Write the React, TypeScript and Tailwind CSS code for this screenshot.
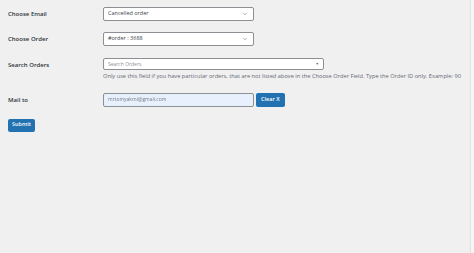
import { ChevronDown } from 'lucide-react'

function SelectBox({ value }: { value: string }) {
  return (
    <div className="flex items-center justify-between w-[151px] h-[14px] bg-white border border-[#8c8f94] rounded-[2px] pl-[4px] pr-[5px]">
      <span className="text-[5.5px] text-[#3c434a] leading-none">{value}</span>
      <ChevronDown size={6} strokeWidth={2.25} className="text-[#646970]" />
    </div>
  )
}

export default function App() {
  return (
    <div className="flex w-full h-[253px] font-['Open_Sans',sans-serif] text-[#2c3338]">
      <div className="flex-1 bg-[#f0f0f1] pl-[8px] pt-[7px]">
        {/* Choose Email */}
        <div className="flex items-center h-[14px]">
          <div className="w-[95px] text-[6px] font-semibold leading-none">Choose Email</div>
          <SelectBox value="Cancelled order" />
        </div>

        {/* Choose Order */}
        <div className="flex items-center h-[14px] mt-[11px]">
          <div className="w-[95px] text-[6px] font-semibold leading-none">Choose Order</div>
          <SelectBox value="#order : 3688" />
        </div>

        {/* Search Orders */}
        <div className="flex mt-[12px]">
          <div className="w-[95px] text-[6px] font-semibold leading-none pt-[4px]">Search Orders</div>
          <div className="flex flex-col">
            <div className="flex items-center justify-between w-[221px] h-[12px] bg-white border border-[#8c8f94] rounded-[2px] pl-[4px] pr-[4px]">
              <span className="text-[5px] text-[#8c8f94] leading-none">Search Orders</span>
              <span className="text-[3.5px] text-[#646970] leading-none">▼</span>
            </div>
            <p className="mt-[4px] text-[5.7px] leading-none text-[#646970] whitespace-nowrap">
              Only use this field if you have particular orders, that are not listed above in the Choose Order Field. Type the Order ID only. Example: 90
            </p>
          </div>
        </div>

        {/* Mail to */}
        <div className="flex items-center h-[14px] mt-[13px]">
          <div className="w-[95px] text-[6px] font-semibold leading-none">Mail to</div>
          <div className="flex items-center w-[151px] h-[14px] bg-[#e8f0fe] border border-[#8c8f94] rounded-[2px] pl-[4px]">
            <span className="text-[5px] text-[#787c82] leading-none blur-[0.6px]">mrtomyakmi@gmail.com</span>
          </div>
          <button className="ml-[2px] h-[14px] px-[5px] bg-[#2271b1] text-white text-[5.5px] font-semibold rounded-[2px] leading-none">
            Clear X
          </button>
        </div>

        {/* Submit */}
        <button className="mt-[12px] h-[13px] w-[27px] bg-[#2271b1] text-white text-[5.5px] font-semibold rounded-[2px] leading-none">
          Submit
        </button>
      </div>
      <div className="w-[4px] h-full border-l border-[#e2e2e4] bg-[#f6f6f7]" />
    </div>
  )
}
